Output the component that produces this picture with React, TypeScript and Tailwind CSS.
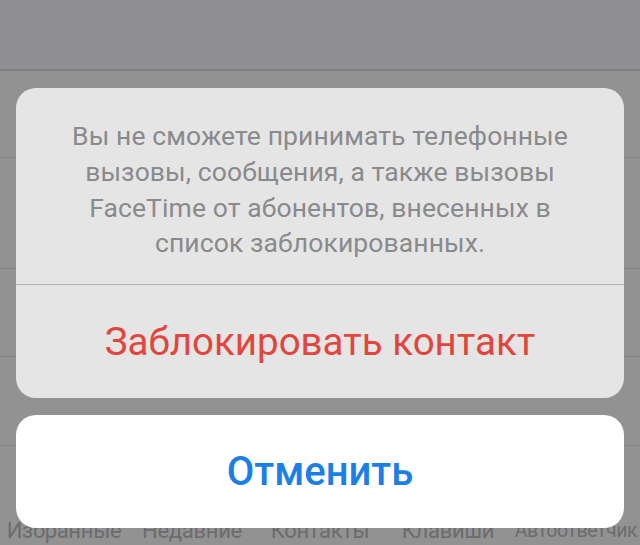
import React from "react";

export default function App() {
  const font = { fontFamily: '"Roboto", "Noto Sans", "Liberation Sans", sans-serif' };
  const tab = "flex justify-center whitespace-nowrap";
  return (
    <div className="relative w-[640px] h-[545px] overflow-hidden bg-[#929293]" style={font}>
      {/* background list */}
      <div className="flex flex-col">
        <div className="h-[71px] bg-[#8f8f91] border-b-2 border-[#7f7f82]" />
        <div className="h-[87px] border-b border-[#858587]" />
        <div className="h-[111px] border-b border-[#858587]" />
        <div className="h-[88px] border-b border-[#858587]" />
        <div className="h-[89px] border-b border-[#858587]" />
      </div>
      <div className="absolute left-0 right-0 bottom-0 h-[98px] grid grid-cols-5 items-end pb-[1px] text-[22px] leading-[26px] text-[#6c6c6e] tracking-[-0.3px]">
        <span className={tab}>Избранные</span>
        <span className={tab}>Недавние</span>
        <span className={tab}>Контакты</span>
        <span className={tab}>Клавиши</span>
        <span className={tab}>
          <span className="text-[19.5px] tracking-[-0.4px]">Автоответчик</span>
        </span>
      </div>

      {/* action sheet */}
      <div className="absolute inset-0 flex flex-col px-4 pt-[88px]">
        <div className="flex flex-col rounded-[20px] bg-[#e5e5e6] overflow-hidden">
          <div className="h-[196px] flex items-center justify-center pt-[7px]">
            <p className="text-center text-[26.5px] leading-[35.6px] tracking-[0.1px] text-[#8a8a8c] whitespace-nowrap">
              Вы не сможете принимать телефонные
              <br />
              вызовы, сообщения, а также вызовы
              <br />
              FaceTime от абонентов, внесенных в
              <br />
              список заблокированных.
            </p>
          </div>
          <div className="h-px bg-[#b4b4b6]" />
          <div className="h-[113px] flex items-center justify-center">
            <span className="text-[38.5px] text-[#e2453c]">Заблокировать контакт</span>
          </div>
        </div>
        <div className="mt-[17px] h-[113px] rounded-[20px] bg-white flex items-center justify-center">
          <span className="text-[40px] font-medium text-[#1c7fe5]">Отменить</span>
        </div>
      </div>
    </div>
  );
}
